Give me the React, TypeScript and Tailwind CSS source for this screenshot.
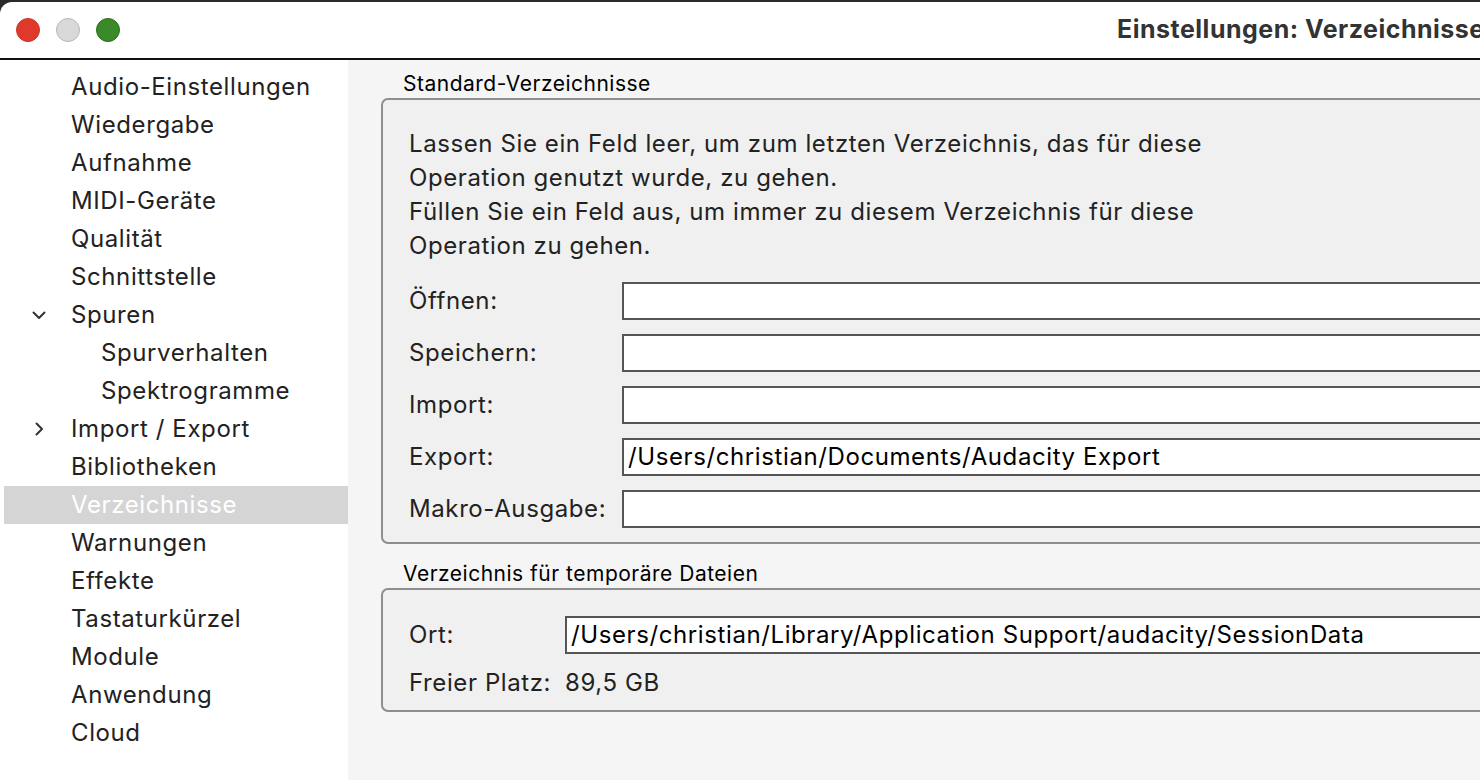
import React from 'react';

const font = { fontFamily: 'Inter, "Noto Sans", sans-serif' };

type NavItem = { label: string; level: 0 | 1; chevron?: 'down' | 'right'; selected?: boolean };

const navItems: NavItem[] = [
    { label: 'Audio-Einstellungen', level: 0 },
    { label: 'Wiedergabe', level: 0 },
    { label: 'Aufnahme', level: 0 },
    { label: 'MIDI-Geräte', level: 0 },
    { label: 'Qualität', level: 0 },
    { label: 'Schnittstelle', level: 0 },
    { label: 'Spuren', level: 0, chevron: 'down' },
    { label: 'Spurverhalten', level: 1 },
    { label: 'Spektrogramme', level: 1 },
    { label: 'Import / Export', level: 0, chevron: 'right' },
    { label: 'Bibliotheken', level: 0 },
    { label: 'Verzeichnisse', level: 0, selected: true },
    { label: 'Warnungen', level: 0 },
    { label: 'Effekte', level: 0 },
    { label: 'Tastaturkürzel', level: 0 },
    { label: 'Module', level: 0 },
    { label: 'Anwendung', level: 0 },
    { label: 'Cloud', level: 0 },
];

const Chevron: React.FC<{ dir: 'down' | 'right' }> = ({ dir }) => (
    <svg width="16" height="16" viewBox="0 0 16 16" className="text-[#333]">
        {dir === 'down' ? (
            <path d="M2.5 5.5 L8 11 L13.5 5.5" fill="none" stroke="currentColor" strokeWidth="2" strokeLinecap="round" strokeLinejoin="round" />
        ) : (
            <path d="M5.5 2.5 L11 8 L5.5 13.5" fill="none" stroke="currentColor" strokeWidth="2" strokeLinecap="round" strokeLinejoin="round" />
        )}
    </svg>
);

const Sidebar: React.FC = () => (
    <div className="w-[348px] shrink-0 bg-white pt-2 pl-1">
        {navItems.map((item) => (
            <div
                key={item.label}
                className={`relative flex h-[38px] items-center text-[24px] tracking-[0.6px] whitespace-nowrap ${
                    item.selected ? 'bg-[#d5d5d5] text-white' : 'text-[#222]'
                } ${item.level === 1 ? 'pl-[97px]' : 'pl-[67px]'}`}
            >
                {item.chevron && (
                    <span className="absolute left-[27px] top-[11px]">
                        <Chevron dir={item.chevron} />
                    </span>
                )}
                {item.label}
            </div>
        ))}
    </div>
);

const Field: React.FC<{ label: string; value?: string; labelWidth: string }> = ({ label, value, labelWidth }) => (
    <div className="flex items-center">
        <div className={`${labelWidth} shrink-0 text-[24px] tracking-[0.6px] text-[#222]`}>{label}</div>
        <div className="flex h-[38px] w-[1000px] shrink-0 items-center border-2 border-[#555] bg-white pl-1 text-[24px] tracking-[0.6px] text-black whitespace-nowrap">
            {value}
        </div>
    </div>
);

const GroupBox: React.FC<{ title: string; className?: string; children: React.ReactNode }> = ({ title, className, children }) => (
    <div>
        <div className="pl-[22px] text-[21px] tracking-[0.5px] leading-[28px] text-black whitespace-nowrap">{title}</div>
        <div className={`w-[1200px] rounded-[7px] border-2 border-[#8e8e8e] bg-[#f0f0f0] pl-[26px] ${className ?? ''}`}>
            {children}
        </div>
    </div>
);

export default function App() {
    return (
        <div className="h-[780px] w-[1480px] overflow-hidden bg-[#2a2a2a] pt-[2px]" style={font}>
            <div className="flex h-[778px] flex-col overflow-hidden rounded-tl-[12px] bg-white">
                {/* title bar */}
                <div className="flex h-[58px] shrink-0 items-center border-b-2 border-[#111]">
                    <div className="flex shrink-0 gap-[16px] pl-[16px]">
                        <span className="h-[24px] w-[24px] rounded-full border border-[#c9362b] bg-[#e0392c]" />
                        <span className="h-[24px] w-[24px] rounded-full border border-[#b8b8b8] bg-[#d9d9d9]" />
                        <span className="h-[24px] w-[24px] rounded-full border border-[#2b6e1e] bg-[#3a8a2a]" />
                    </div>
                    <div className="ml-[997px] shrink-0 whitespace-nowrap text-[25px] font-bold tracking-[0.5px] text-[#333]">
                        Einstellungen: Verzeichnisse
                    </div>
                </div>

                <div className="flex flex-1">
                    <Sidebar />

                    <div className="flex-1 overflow-hidden bg-[#f5f5f5] pl-[33px] pt-[10px]">
                        <GroupBox title="Standard-Verzeichnisse" className="pt-[27px] pb-[14px]">
                            <div className="text-[24px] tracking-[0.6px] leading-[34px] text-[#222] whitespace-nowrap">
                                <p>Lassen Sie ein Feld leer, um zum letzten Verzeichnis, das für diese</p>
                                <p>Operation genutzt wurde, zu gehen.</p>
                                <p>Füllen Sie ein Feld aus, um immer zu diesem Verzeichnis für diese</p>
                                <p>Operation zu gehen.</p>
                            </div>
                            <div className="mt-[19px] flex flex-col gap-[14px]">
                                <Field label="Öffnen:" labelWidth="w-[213px]" />
                                <Field label="Speichern:" labelWidth="w-[213px]" />
                                <Field label="Import:" labelWidth="w-[213px]" />
                                <Field label="Export:" labelWidth="w-[213px]" value="/Users/christian/Documents/Audacity Export" />
                                <Field label="Makro-Ausgabe:" labelWidth="w-[213px]" />
                            </div>
                        </GroupBox>

                        <div className="mt-[16px]">
                            <GroupBox title="Verzeichnis für temporäre Dateien" className="pt-[26px] pb-[11px]">
                                <Field
                                    label="Ort:"
                                    labelWidth="w-[156px]"
                                    value="/Users/christian/Library/Application Support/audacity/SessionData"
                                />
                                <div className="mt-[13px] flex h-[32px] items-center text-[24px] tracking-[0.6px] text-[#222]">
                                    <span className="w-[156px] shrink-0">Freier Platz:</span>
                                    <span>89,5 GB</span>
                                </div>
                            </GroupBox>
                        </div>
                    </div>
                </div>
            </div>
        </div>
    );
}
